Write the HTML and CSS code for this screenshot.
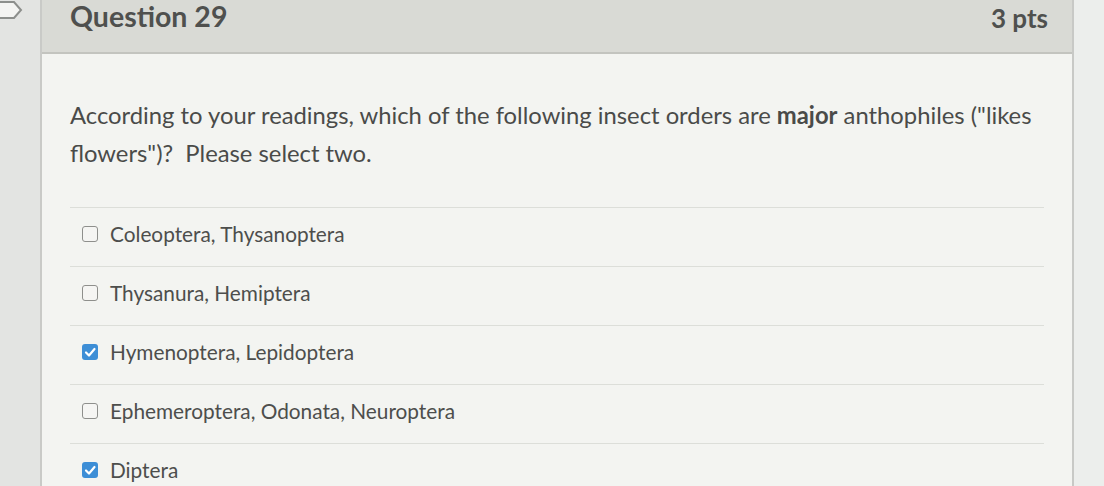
FILE: index.html
```html
<!DOCTYPE html>
<html>
<head>
<meta charset="utf-8">
<link rel="stylesheet" href="styles.css">
</head>
<body>
<div class="page">
  <div class="gutter">
    <svg class="flag" width="24" height="22" viewBox="0 0 24 22">
      <path d="M-4 2 H14 L21 10 L14 18 H-4" fill="#f4f4f2" stroke="#8d8f8c" stroke-width="2"/>
    </svg>
  </div>
  <div class="card">
    <div class="header">
      <span class="title">Question 29</span>
      <span class="pts">3 pts</span>
    </div>
    <div class="body">
      <p class="question">According to your readings, which of the following insect orders are <strong>major</strong> anthophiles ("likes flowers")?&nbsp; Please select two.</p>
      <div class="answers">
        <div class="answer"><span class="box"></span><span class="label">Coleoptera, Thysanoptera</span></div>
        <div class="answer"><span class="box"></span><span class="label">Thysanura, Hemiptera</span></div>
        <div class="answer"><span class="box checked"><svg viewBox="0 0 16 16" width="16" height="16"><path d="M4 8.5 L7 11.5 L12.5 5" fill="none" stroke="#fff" stroke-width="2.2" stroke-linecap="round" stroke-linejoin="round"/></svg></span><span class="label">Hymenoptera, Lepidoptera</span></div>
        <div class="answer"><span class="box"></span><span class="label">Ephemeroptera, Odonata, Neuroptera</span></div>
        <div class="answer"><span class="box checked"><svg viewBox="0 0 16 16" width="16" height="16"><path d="M4 8.5 L7 11.5 L12.5 5" fill="none" stroke="#fff" stroke-width="2.2" stroke-linecap="round" stroke-linejoin="round"/></svg></span><span class="label">Diptera</span></div>
      </div>
    </div>
  </div>
  <div class="rightside"></div>
</div>
</body>
</html>
```

FILE: styles.css
```css
html, body {
  margin: 0;
  padding: 0;
}
body {
  width: 1104px;
  height: 486px;
  overflow: hidden;
  background: #e9eae8;
  font-family: Lato, "Open Sans", sans-serif;
  color: #4d4e4c;
}
.page {
  display: flex;
  height: 486px;
}
.gutter {
  width: 40px;
  flex: none;
  background: #e3e4e2;
  border-right: 2px solid #c9cac7;
}
.flag {
  display: block;
}
.card {
  width: 1030px;
  flex: none;
  background: #f3f4f1;
  border-right: 2px solid #c8c9c6;
  display: flex;
  flex-direction: column;
}
.rightside {
  flex: 1;
  background: #eceeec;
}
.header {
  flex: none;
  height: 52px;
  background: #d9dad5;
  border-bottom: 2px solid #c3c4bf;
  display: flex;
  justify-content: space-between;
  align-items: flex-start;
  padding: 0 24px 0 28px;
}
.title {
  font-weight: 700;
  font-size: 28.5px;
  line-height: 32px;
  color: #4f504e;
}
.pts {
  font-weight: 700;
  font-size: 26px;
  line-height: 36px;
  color: #4f504e;
}
.body {
  flex: none;
  padding: 0 28px 0 28px;
}
.question {
  margin: 42px 0 0 0;
  font-size: 23.8px;
  line-height: 38px;
  color: #4a4b49;
}
.question strong {
  font-weight: 700;
}
.answers {
  margin-top: 35px;
}
.answer {
  border-top: 1px solid #dcded9;
  height: 59px;
  display: flex;
  align-items: flex-start;
  padding-top: 13px;
  box-sizing: border-box;
  padding-left: 12px;
}
.box {
  width: 14px;
  height: 14px;
  border: 1.5px solid #8e8f8c;
  border-radius: 3px;
  background: #f5f5f3;
  margin-top: 5px;
  flex: none;
  display: flex;
}
.box.checked {
  width: 16px;
  height: 16px;
  border: none;
  background: #3d8ed6;
}
.label {
  margin-left: 12px;
  font-size: 20.8px;
  line-height: 26px;
  color: #4d4e4c;
}
```
